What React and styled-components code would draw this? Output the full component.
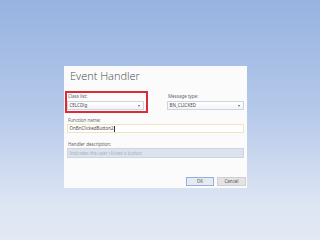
import React from "react";
import styled, { createGlobalStyle } from "styled-components";

const GlobalStyle = createGlobalStyle`
  html, body {
    margin: 0;
    padding: 0;
  }
  body {
    font-family: "Noto Sans", "Open Sans", sans-serif;
  }
`;

const Page = styled.div`
  width: 320px;
  height: 240px;
  box-sizing: border-box;
  padding: 66px 0 0 64px;
  background: linear-gradient(180deg, #97b3e1 0%, #b4c8e9 45%, #dde5f3 85%, #e3e9f5 100%);
  overflow: hidden;
`;

const Dialog = styled.div`
  width: 183px;
  height: 122px;
  box-sizing: border-box;
  background: #fbfbfc;
  display: flex;
  flex-direction: column;
  padding: 0 1px 0 1px;
`;

const Title = styled.div`
  margin: 3px 0 0 5px;
  font-size: 11px;
  line-height: 13px;
  color: #4a4a4a;
  font-weight: 300;
  font-family: "Open Sans", "Noto Sans", sans-serif;
`;

const Row = styled.div`
  display: flex;
  gap: 19px;
  margin-top: 9px;
`;

const Highlight = styled.div`
  width: 83px;
  height: 22px;
  box-sizing: border-box;
  border: 2px solid #dc2a36;
`;

const Group = styled.div`
  width: 77px;
  padding-top: 2px;
`;

const Label = styled.div`
  font-size: 4.5px;
  line-height: 6px;
  height: 6px;
  color: #666;
  padding-left: 1px;
  margin-top: ${(p) => p.$top || 0}px;
  white-space: nowrap;
`;

const Field = styled.div`
  position: relative;
  box-sizing: border-box;
  width: ${(p) => p.$width || 77}px;
  height: ${(p) => p.$height || 9}px;
  margin-top: ${(p) => (p.$mt === undefined ? 2 : p.$mt)}px;
  border: 1px solid ${(p) => p.$border || "#cdd4df"};
  background: ${(p) => p.$bg || "linear-gradient(180deg, #ffffff, #f1f4f8)"};
  color: ${(p) => p.$color || "#4a4a4a"};
  font-size: 4.5px;
  line-height: ${(p) => (p.$height || 9) - 2}px;
  padding-left: 1.5px;
  white-space: nowrap;
  display: flex;
  align-items: center;
`;

const Arrow = styled.span`
  position: absolute;
  right: 3px;
  top: 3px;
  width: 0;
  height: 0;
  border-left: 1.5px solid transparent;
  border-right: 1.5px solid transparent;
  border-top: 2px solid #666;
`;

const Caret = styled.span`
  display: inline-block;
  width: 1px;
  height: 6px;
  background: #333;
`;

const Section = styled.div`
  padding-left: 2px;
`;

const Buttons = styled.div`
  display: flex;
  justify-content: flex-end;
  gap: 3px;
  margin-top: 19px;
`;

const Button = styled.div`
  box-sizing: border-box;
  width: ${(p) => p.$width}px;
  height: 9px;
  border: 1px solid ${(p) => (p.$primary ? "#8fb2e0" : "#cfcfcf")};
  background: ${(p) => (p.$primary ? "#e7eaf0" : "#e3e3e5")};
  color: #555;
  font-size: 4.5px;
  line-height: 7px;
  text-align: center;
`;

const App = () => {
  return (
    <Page>
      <GlobalStyle />
      <Dialog>
        <Title>Event Handler</Title>
        <Row>
          <Highlight>
            <Label>Class list:</Label>
            <Field>
              CELCDlg
              <Arrow />
            </Field>
          </Highlight>
          <Group>
            <Label>Message type:</Label>
            <Field>
              BN_CLICKED
              <Arrow />
            </Field>
          </Group>
        </Row>
        <Section>
          <Label $top={4}>Function name:</Label>
          <Field $width={177} $mt={1} $bg="#ffffff" $border="#f1e3bf">
            OnBnClickedButton2
            <Caret />
          </Field>
          <Label $top={8}>Handler description:</Label>
          <Field $width={177} $height={10} $mt={1} $bg="#dde3ed" $border="#ccd5e2" $color="#a9b1c0">
            Indicates the user clicked a button
          </Field>
        </Section>
        <Buttons>
          <Button $width={28} $primary>OK</Button>
          <Button $width={29}>Cancel</Button>
        </Buttons>
      </Dialog>
    </Page>
  );
};

export default App;
